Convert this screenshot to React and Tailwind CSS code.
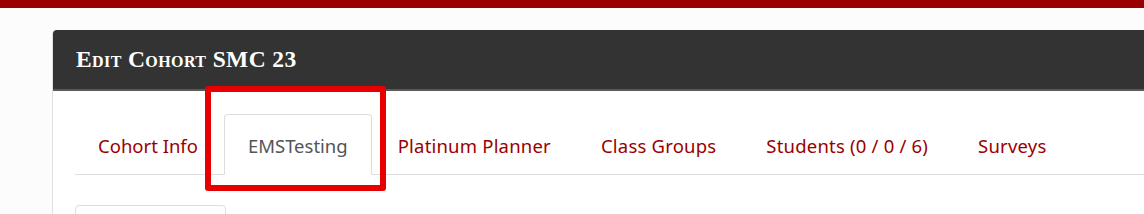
export default function App() {
  const tabs = [
    { label: "Cohort Info" },
    { label: "EMSTesting", active: true },
    { label: "Platinum Planner" },
    { label: "Class Groups" },
    { label: "Students (0 / 0 / 6)" },
    { label: "Surveys" },
  ];
  return (
    <div className="w-[1144px] h-[214px] overflow-hidden bg-[#fcfcfc] flex flex-col">
      <div className="h-[8px] bg-[#990000] shrink-0" />
      <div className="flex-1 pt-[22px] pl-[52px]">
        <div className="bg-white rounded-tl-[4px] border-l border-[#e0e0e0] h-full">
          <div className="h-[61px] bg-[#333333] border-b-2 border-[#5a5a5a] rounded-tl-[4px] flex items-center pl-[23px]">
            <h1
              className="text-white text-[23.5px] font-bold tracking-[0.4px]"
              style={{ fontFamily: '"Liberation Serif", serif', fontVariant: "small-caps" }}
            >
              Edit Cohort SMC 23
            </h1>
          </div>
          <div className="pl-[22px] pt-[23px]">
            <ul
              className="flex border-b border-[#dddddd] pl-0"
              style={{ fontFamily: '"Noto Sans", sans-serif' }}
            >
              {tabs.map((t, i) => (
                <li key={t.label} className={"-mb-px " + (i === 0 ? "mr-[2px] -ml-px" : "mr-[2px]")}>
                  <span
                    className={
                      "block h-[61px] leading-[61px] text-[18.5px] rounded-t-[4px] border " +
                      (i === 0 ? "pl-[23px] pr-[23px] " : "px-[23px] ") +
                      (t.active
                        ? "text-[#555555] bg-white border-[#dddddd] border-b-white"
                        : "text-[#990000] border-transparent " + (i >= 2 ? "tracking-[0.2px]" : ""))
                    }
                  >
                    {t.label}
                  </span>
                </li>
              ))}
            </ul>
            <div className="mt-[30px] w-[151px] h-[20px] border border-[#dddddd] rounded-t-[4px]" />
          </div>
        </div>
      </div>
      <AnnotationBox />
    </div>
  );
}

function AnnotationBox() {
  return (
    <div className="absolute left-[205px] top-[86px] w-[181px] h-[105px] border-[6px] border-[#e60000] rounded-[3px] pointer-events-none" />
  );
}
